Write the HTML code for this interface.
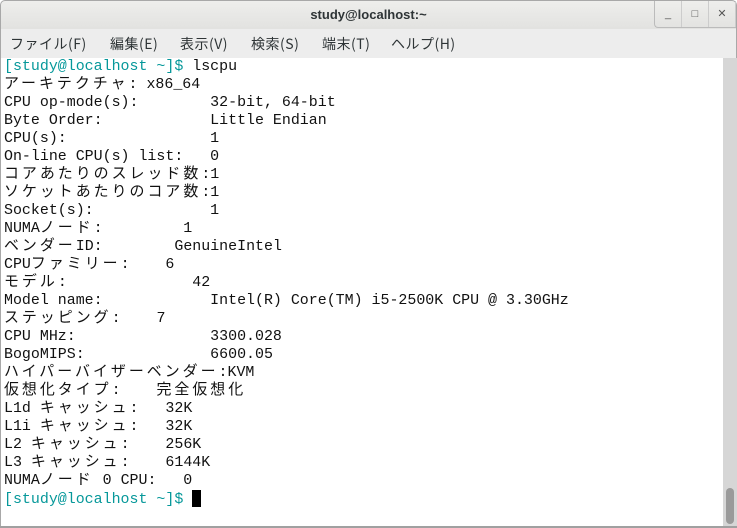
<!DOCTYPE html>
<html><head><meta charset="utf-8"><style>
body{margin:0;width:737px;height:528px;overflow:hidden;background:#fff;font-family:"Liberation Sans","Noto Sans CJK JP",sans-serif;}
#title{position:absolute;left:0;top:0;width:735px;height:28px;background:linear-gradient(#eeeeec,#e2e2e0);border:1px solid #a8a8a8;border-bottom:none;border-radius:5px 5px 0 0;}
#title .t{position:absolute;left:0;right:0;top:6px;text-align:center;font-weight:bold;font-size:13px;color:#2e3436;}
.btns{position:absolute;right:0;top:0;height:26px;display:flex;border-left:1px solid #bbb;border-bottom:1px solid #bbb;border-radius:0 0 0 4px;}
.btns div{width:26px;height:26px;border-right:1px solid #ccc;font-size:11px;color:#555;text-align:center;line-height:26px;}
#menu{position:absolute;left:0;top:29px;width:737px;height:29px;background:#ededed;border-left:1px solid #a8a8a8;border-right:1px solid #a8a8a8;box-sizing:border-box;font-size:14px;color:#2e3436;font-family:"Noto Sans CJK JP",sans-serif;}
#menu span{position:absolute;top:5px;letter-spacing:0.5px;}
#term{position:absolute;left:0;top:58px;width:723px;height:468px;background:#fff;border-left:1px solid #a8a8a8;box-sizing:border-box;}
pre{margin:0;position:absolute;left:3px;top:0px;font-family:"Liberation Mono","Noto Sans CJK JP",monospace;font-size:14.95px;line-height:18px;color:#111;}
.j{letter-spacing:3px;}
.c{color:#06989a;}
#sb{position:absolute;left:723px;top:58px;width:14px;height:468px;background:#d6d6d6;}
#th{position:absolute;left:726px;top:488px;width:8px;height:36px;background:#9a9a9a;border-radius:4px;}
#bot{position:absolute;left:0;top:526px;width:737px;height:2px;background:#a0a0a0;}
#cur{display:inline-block;width:9px;height:17px;background:#000;vertical-align:-4px;}
</style></head><body>
<div id="title"><div class="t">study@localhost:~</div>
<div class="btns"><div>_</div><div>□</div><div>✕</div></div></div>
<div id="menu"><span style="left:9px">ファイル(F)</span><span style="left:109px">編集(E)</span><span style="left:179px">表示(V)</span><span style="left:250px">検索(S)</span><span style="left:321px">端末(T)</span><span style="left:390px">ヘルプ(H)</span></div>
<div id="term"><pre><span class="c">[study@localhost ~]$</span> lscpu
<span class="j">アーキテクチャ</span>: x86_64
CPU op-mode(s):        32-bit, 64-bit
Byte Order:            Little Endian
CPU(s):                1
On-line CPU(s) list:   0
<span class="j">コアあたりのスレッド数</span>:1
<span class="j">ソケットあたりのコア数</span>:1
Socket(s):             1
NUMA<span class="j">ノード</span>:         1
<span class="j">ベンダー</span>ID:        GenuineIntel
CPU<span class="j">ファミリー</span>:    6
<span class="j">モデル</span>:              42
Model name:            Intel(R) Core(TM) i5-2500K CPU @ 3.30GHz
<span class="j">ステッピング</span>:    7
CPU MHz:               3300.028
BogoMIPS:              6600.05
<span class="j">ハイパーバイザーベンダー</span>:KVM
<span class="j">仮想化タイプ</span>:    <span class="j">完全仮想化</span>
L1d <span class="j">キャッシュ</span>:   32K
L1i <span class="j">キャッシュ</span>:   32K
L2 <span class="j">キャッシュ</span>:    256K
L3 <span class="j">キャッシュ</span>:    6144K
NUMA<span class="j">ノード</span> 0 CPU:   0
<span class="c">[study@localhost ~]$</span> <span id="cur"></span></pre></div>
<div id="sb"></div><div id="th"></div><div id="bot"></div>
</body></html>
